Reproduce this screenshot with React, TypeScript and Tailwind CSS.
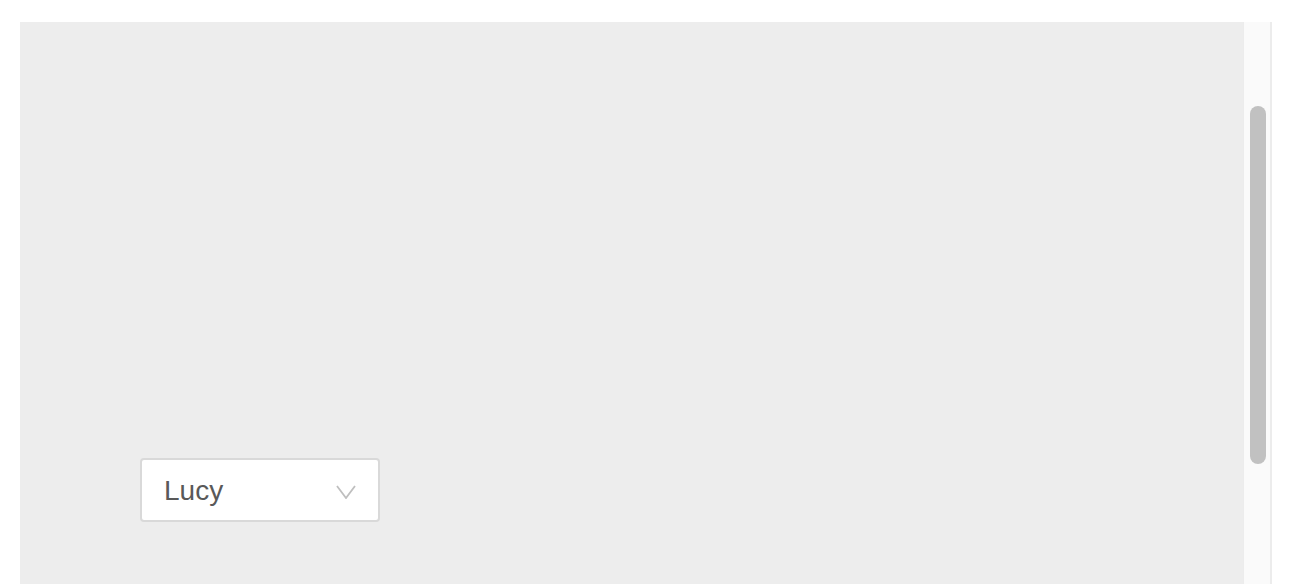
export default function App() {
  return (
    <div className="w-[1298px] h-[584px] overflow-hidden bg-white pt-[22px] pl-[20px] flex">
      <div className="w-[1223px] h-[562px] bg-[#ededed] pt-[436px] pl-[120px]">
        <div
          className="w-[240px] h-[64px] bg-white border-2 border-[#d9d9d9] rounded-[4px] flex items-center justify-between pl-[22px] pr-[22px]"
          style={{ fontFamily: '"Liberation Sans", Arial, sans-serif' }}
        >
          <span className="text-[28px] leading-none text-[#595959] pt-[2px]">Lucy</span>
          <svg width="20" height="14" viewBox="0 0 20 14" fill="none" className="mt-[3px]">
            <path d="M1 1 L10 13 L19 1" stroke="#bfbfbf" strokeWidth="1.8" />
          </svg>
        </div>
      </div>
      <div className="w-[29px] h-[562px] bg-[#fafafa] border-l border-r-2 border-[#ececec] pt-[84px] pl-[6px]">
        <div className="w-[16px] h-[358px] rounded-full bg-[#c1c1c1]" />
      </div>
    </div>
  );
}
